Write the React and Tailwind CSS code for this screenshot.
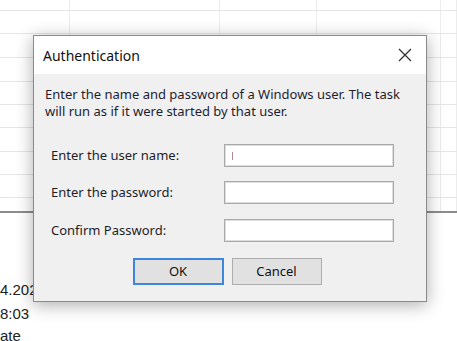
import React from "react";

const rowHeights = [11, 23, 24, 24, 23, 23, 24, 23, 23, 15];
const colWidths = [70, 150, 97, 124, 16];

const Sheet = () => (
    <div className="w-full">
        {rowHeights.map((h, r) => (
            <div key={r}
                 className={r === rowHeights.length - 1
                     ? "flex border-b-2 border-[#8c8c8c]"
                     : "flex border-b border-[#e6e6e6]"}
                 style={{height: h}}>
                {colWidths.map((w, c) => (
                    <div key={c} className="h-full shrink-0 border-r border-[#ececec]" style={{width: w}}/>
                ))}
            </div>
        ))}
    </div>
);

const Field = ({label, caret}) => (
    <div className="flex items-center h-[23px]">
        <div className="w-[190px] pl-[17px] text-[13px] text-[#1e1e28]">{label}</div>
        <div className="w-[170px] h-[23px] bg-white border border-[#a9a9a9] shadow-[inset_0_0_0_1px_#dedede] flex items-center pl-[7px]">
            {caret && <span className="block w-px h-[8px] bg-[#b08a90]"/>}
        </div>
    </div>
);

const App = () => {
    return (
        <div className="relative w-[457px] h-[341px] overflow-hidden bg-white"
             style={{fontFamily: '"Noto Sans", "Open Sans", sans-serif'}}>
            <Sheet/>
            <div className="pt-[65px] text-[15px] leading-[24px] text-[#222]"
                 style={{fontFamily: '"Liberation Sans", Arial, sans-serif'}}>
                <div>4.2023</div>
                <div>8:03</div>
                <div className="-mt-[2px]">ate</div>
            </div>

            <div className="absolute left-[33px] top-[35px] w-[394px] h-[267px] flex flex-col border border-[#8a8a8a] shadow-[0_3px_16px_rgba(0,0,0,0.32)]">
                <div className="h-[38px] bg-white flex items-center justify-between pl-[9px] pr-[14px]">
                    <span className="text-[14px] text-[#111]">Authentication</span>
                    <svg width="14" height="14" viewBox="0 0 14 14" fill="none" stroke="#333" strokeWidth="1.3">
                        <path d="M1 1 L13 13 M13 1 L1 13"/>
                    </svg>
                </div>
                <div className="flex-1 bg-[#f0f0f0] pt-[12px]">
                    <p className="pl-[11px] w-[375px] text-[13px] leading-[17px] text-[#1e1e30]">
                        Enter the name and password of a Windows user. The task will run as if it were started by that user.
                    </p>
                    <div className="mt-[24px] flex flex-col gap-[14px]">
                        <Field label="Enter the user name:" caret/>
                        <Field label="Enter the password:"/>
                        <div className="mt-px">
                            <Field label="Confirm Password:"/>
                        </div>
                    </div>
                    <div className="mt-[16px] flex justify-center gap-[8px] pr-[6px]">
                        <button className="w-[91px] h-[27px] bg-[#e1e1e1] border-2 border-[#3c86dc] text-[13px] text-[#111]">OK</button>
                        <button className="w-[90px] h-[27px] bg-[#e1e1e1] border border-[#adadad] text-[13px] text-[#111]">Cancel</button>
                    </div>
                </div>
            </div>
        </div>
    );
};

export default App;
